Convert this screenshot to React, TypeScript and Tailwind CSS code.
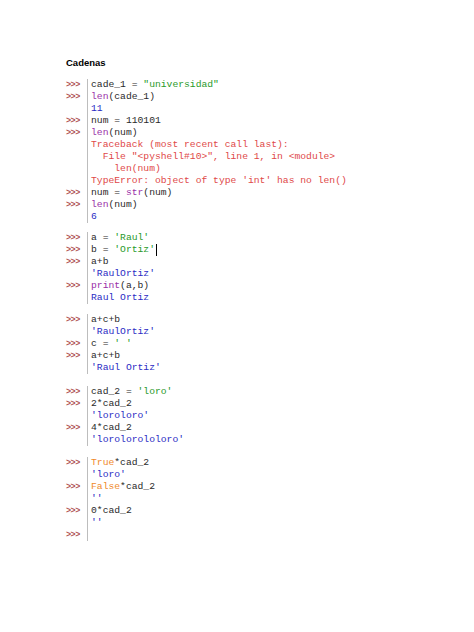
type Seg = [string, string?];
type Line = { p?: boolean; segs: Seg[]; cursor?: boolean };

const G = "text-[#2a9a2a]";
const P = "text-[#9a2fa8]";
const B = "text-[#2b2bc4]";
const R = "text-[#e04848]";
const O = "text-[#f08a2a]";

const blocks: { mt: string; lines: Line[] }[] = [
  {
    mt: "mt-[10px]",
    lines: [
      { p: true, segs: [["cade_1 = "], ['"universidad"', G]] },
      { p: true, segs: [["len", P], ["(cade_1)"]] },
      { segs: [["11", B]] },
      { p: true, segs: [["num = 110101"]] },
      { p: true, segs: [["len", P], ["(num)"]] },
      { segs: [["Traceback (most recent call last):", R]] },
      { segs: [['  File "<pyshell#10>", line 1, in <module>', R]] },
      { segs: [["    len(num)", R]] },
      { segs: [["TypeError: object of type 'int' has no len()", R]] },
      { p: true, segs: [["num = "], ["str", P], ["(num)"]] },
      { p: true, segs: [["len", P], ["(num)"]] },
      { segs: [["6", B]] },
    ],
  },
  {
    mt: "mt-[9px]",
    lines: [
      { p: true, segs: [["a = "], ["'Raul'", G]] },
      { p: true, segs: [["b = "], ["'Ortiz'", G]], cursor: true },
      { p: true, segs: [["a+b"]] },
      { segs: [["'RaulOrtiz'", B]] },
      { p: true, segs: [["print", P], ["(a,b)"]] },
      { segs: [["Raul Ortiz", B]] },
    ],
  },
  {
    mt: "mt-[10px]",
    lines: [
      { p: true, segs: [["a+c+b"]] },
      { segs: [["'RaulOrtiz'", B]] },
      { p: true, segs: [["c = "], ["' '", G]] },
      { p: true, segs: [["a+c+b"]] },
      { segs: [["'Raul Ortiz'", B]] },
    ],
  },
  {
    mt: "mt-[12px]",
    lines: [
      { p: true, segs: [["cad_2 = "], ["'loro'", G]] },
      { p: true, segs: [["2*cad_2"]] },
      { segs: [["'loroloro'", B]] },
      { p: true, segs: [["4*cad_2"]] },
      { segs: [["'lorolorololoro'", B]] },
    ],
  },
  {
    mt: "mt-[11px]",
    lines: [
      { p: true, segs: [["True", O], ["*cad_2"]] },
      { segs: [["'loro'", B]] },
      { p: true, segs: [["False", O], ["*cad_2"]] },
      { segs: [["''", B]] },
      { p: true, segs: [["0*cad_2"]] },
      { segs: [["''", B]] },
      { p: true, segs: [[""]] },
    ],
  },
];

function ShellLine({ line }: { line: Line }) {
  return (
    <div className="flex h-[12px] items-center leading-[12px]">
      <div className="w-[21px] shrink-0 text-[8.5px] font-bold tracking-[-0.5px] text-[#b05454]">
        {line.p ? ">>>" : ""}
      </div>
      <div className="flex h-full items-center border-l border-[#bdbdbd] pl-[3px] whitespace-pre text-[#2a2a2a]">
        {line.segs.map(([t, c], i) => (
          <span key={i} className={c}>
            {t}
          </span>
        ))}
        {line.cursor && <span className="ml-[1px] inline-block h-[12px] w-[1.5px] bg-black" />}
      </div>
    </div>
  );
}

export default function App() {
  return (
    <div className="min-h-[632px] w-[474px] bg-white pl-[66px] pt-[57px]">
      <h1 className="text-[9.5px] leading-[12px] font-bold text-black [font-family:'Liberation_Sans',Arial,sans-serif]">
        Cadenas
      </h1>
      <div className="text-[9.7px] [font-family:'Liberation_Mono','Courier_New',monospace]">
        {blocks.map((b, i) => (
          <div key={i} className={b.mt}>
            {b.lines.map((l, j) => (
              <ShellLine key={j} line={l} />
            ))}
          </div>
        ))}
      </div>
    </div>
  );
}
